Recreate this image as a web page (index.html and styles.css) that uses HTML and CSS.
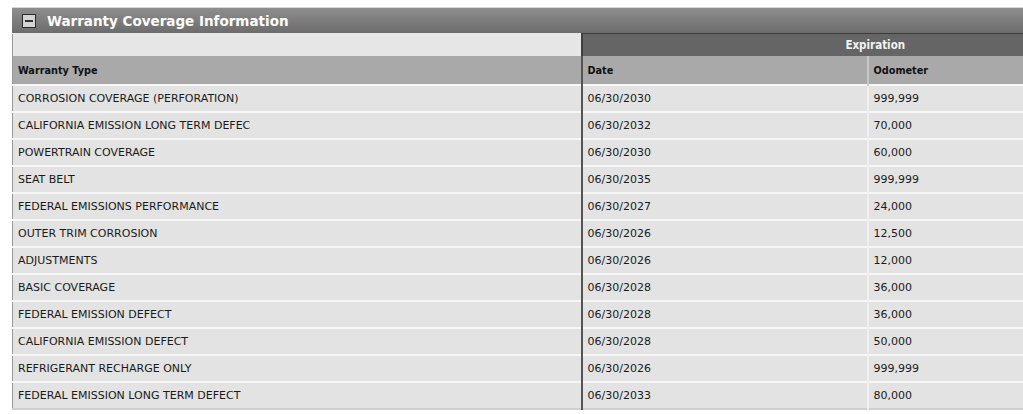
FILE: index.html
```html
<!DOCTYPE html>
<html>
<head>
<meta charset="utf-8">
<link rel="stylesheet" href="styles.css">
</head>
<body>
<div class="panel">
  <div class="panel-head">
    <span class="toggle"><span class="minus"></span></span>
    <span class="title">Warranty Coverage Information</span>
  </div>
  <table class="grid">
    <colgroup>
      <col class="c1"><col class="c2"><col class="c3">
    </colgroup>
    <thead>
      <tr class="group">
        <th class="blank"></th>
        <th class="exp" colspan="2">Expiration</th>
      </tr>
      <tr class="cols">
        <th>Warranty Type</th>
        <th class="date">Date</th>
        <th class="odo">Odometer</th>
      </tr>
    </thead>
    <tbody>
      <tr><td>CORROSION COVERAGE (PERFORATION)</td><td class="date">06/30/2030</td><td class="odo">999,999</td></tr>
      <tr><td>CALIFORNIA EMISSION LONG TERM DEFEC</td><td class="date">06/30/2032</td><td class="odo">70,000</td></tr>
      <tr><td>POWERTRAIN COVERAGE</td><td class="date">06/30/2030</td><td class="odo">60,000</td></tr>
      <tr><td>SEAT BELT</td><td class="date">06/30/2035</td><td class="odo">999,999</td></tr>
      <tr><td>FEDERAL EMISSIONS PERFORMANCE</td><td class="date">06/30/2027</td><td class="odo">24,000</td></tr>
      <tr><td>OUTER TRIM CORROSION</td><td class="date">06/30/2026</td><td class="odo">12,500</td></tr>
      <tr><td>ADJUSTMENTS</td><td class="date">06/30/2026</td><td class="odo">12,000</td></tr>
      <tr><td>BASIC COVERAGE</td><td class="date">06/30/2028</td><td class="odo">36,000</td></tr>
      <tr><td>FEDERAL EMISSION DEFECT</td><td class="date">06/30/2028</td><td class="odo">36,000</td></tr>
      <tr><td>CALIFORNIA EMISSION DEFECT</td><td class="date">06/30/2028</td><td class="odo">50,000</td></tr>
      <tr><td>REFRIGERANT RECHARGE ONLY</td><td class="date">06/30/2026</td><td class="odo">999,999</td></tr>
      <tr><td>FEDERAL EMISSION LONG TERM DEFECT</td><td class="date">06/30/2033</td><td class="odo">80,000</td></tr>
    </tbody>
  </table>
</div>
</body>
</html>
```

FILE: styles.css
```css
html, body {
  margin: 0;
  padding: 0;
  background: #ffffff;
  overflow: hidden;
}
body {
  font-family: "DejaVu Sans", sans-serif;
  font-size: 11px;
  color: #1a1a1a;
}
.panel {
  margin: 7px 0 0 12px;
  width: 1011px;
}
.panel-head {
  border-top: 1px solid #d8d8d8;
  background: linear-gradient(#8e8e8e, #6c6c6c);
  display: flex;
  align-items: center;
  padding-left: 10px;
  gap: 11px;
  box-sizing: border-box;
  height: 26px;
}
.toggle {
  width: 12px;
  height: 12px;
  border: 1px solid #2a2a2a;
  background: #d4d4d4;
  display: flex;
  align-items: center;
  justify-content: center;
}
.minus {
  width: 8px;
  height: 2px;
  background: #333;
}
.title {
  color: #ffffff;
  font-weight: bold;
  font-size: 13.5px;
}
.grid {
  width: 100%;
  border-collapse: collapse;
  table-layout: fixed;
  border-left: 1px solid #9a9a9a;
  border-bottom: 2px solid #cfcfcf;
}
.c1 { width: 569px; }
.c2 { width: 286px; }
.grid th, .grid td {
  text-align: left;
  padding: 0 0 0 5px;
  white-space: nowrap;
  overflow: hidden;
}
.group th {
  height: 22px;
  border-top: 1px solid #3a3a3a;
}
.group .blank {
  background: #e6e6e6;
  border-top: 1px solid #e6e6e6;
}
.grid .group .exp {
  background: #656565;
  color: #f2f2f2;
  text-align: center;
  padding-left: 145px;
  font-weight: bold;
  font-family: "DejaVu Sans Condensed", "DejaVu Sans", sans-serif;
  font-size: 11.5px;
  border-left: 2px solid #3f3f3f;
}
.cols th {
  height: 28px;
  background: #a9a9a9;
  color: #111;
  font-weight: bold;
  font-family: "DejaVu Sans Condensed", "DejaVu Sans", sans-serif;
  font-size: 10.8px;
}
.cols .date {
  border-left: 2px solid #555;
}
.cols .odo {
  border-left: 2px solid #c8c8c8;
}
tbody td {
  height: 25px;
  background: #e3e3e3;
  border-top: 2px solid #f6f6f6;
}
tbody td.date {
  border-left: 2px solid #555;
}
tbody td.odo {
  border-left: 2px solid #f0f0f0;
}
```
